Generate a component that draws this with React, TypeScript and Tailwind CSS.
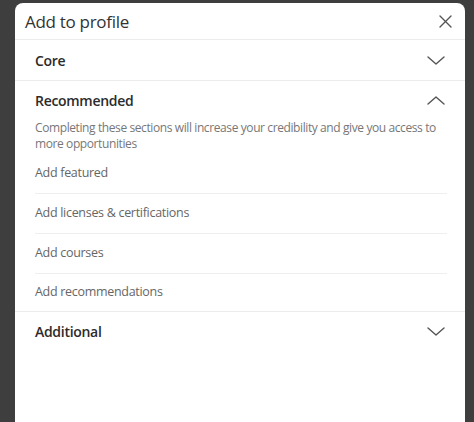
const recommended = [
  'Add featured',
  'Add licenses & certifications',
  'Add courses',
  'Add recommendations',
];

function Chevron({ up }: { up?: boolean }) {
  return (
    <svg width="18" height="9" viewBox="0 0 18 9" fill="none" stroke="#555" strokeWidth="1.4" strokeLinecap="round" strokeLinejoin="round">
      {up ? <polyline points="1,8 9,1 17,8" /> : <polyline points="1,1 9,8 17,1" />}
    </svg>
  );
}

function SectionHeader({ title, open }: { title: string; open?: boolean }) {
  return (
    <div className="flex h-[39px] items-center justify-between pl-[20px] pr-[20px]">
      <span className="text-[14px] font-semibold tracking-[-0.3px] text-[#2b2b2b]">{title}</span>
      <Chevron up={open} />
    </div>
  );
}

export default function App() {
  return (
    <div
      className="h-[422px] w-[474px] overflow-hidden bg-[#3e3e3e] pl-[15px] pt-[3px]"
      style={{ fontFamily: '"Open Sans", "Noto Sans", sans-serif' }}
    >
      <div className="h-[430px] w-[450px] rounded-t-[8px] bg-white">
        <div className="flex h-[37px] items-center justify-between border-b border-[#ececec] pl-[10px] pr-[13px]">
          <h2 className="pt-[2px] text-[17px] tracking-[-0.3px] text-[#333]">Add to profile</h2>
          <svg width="13" height="13" viewBox="0 0 13 13" stroke="#555" strokeWidth="1.4" strokeLinecap="round">
            <line x1="1" y1="1" x2="12" y2="12" />
            <line x1="12" y1="1" x2="1" y2="12" />
          </svg>
        </div>

        <div className="border-b border-[#ececec]">
          <div className="pt-[1px]">
            <SectionHeader title="Core" />
          </div>
        </div>

        <div className="border-b border-[#ececec]">
          <SectionHeader title="Recommended" open />
          <p className="pl-[20px] pr-[20px] text-[12px] leading-[16px] tracking-[-0.4px] text-[#777]">
            Completing these sections will increase your credibility and give you access to more opportunities
          </p>
          <ul className="mt-[2px] pl-[20px] pr-[18px]">
            {recommended.map((item, i) => (
              <li
                key={item}
                className={`flex items-center text-[12.5px] tracking-[-0.3px] text-[#666] ${
                  i < recommended.length - 1 ? 'h-[40px] border-b border-[#efefef]' : 'h-[37px]'
                }`}
              >
                {item}
              </li>
            ))}
          </ul>
        </div>

        <SectionHeader title="Additional" />
      </div>
    </div>
  );
}
